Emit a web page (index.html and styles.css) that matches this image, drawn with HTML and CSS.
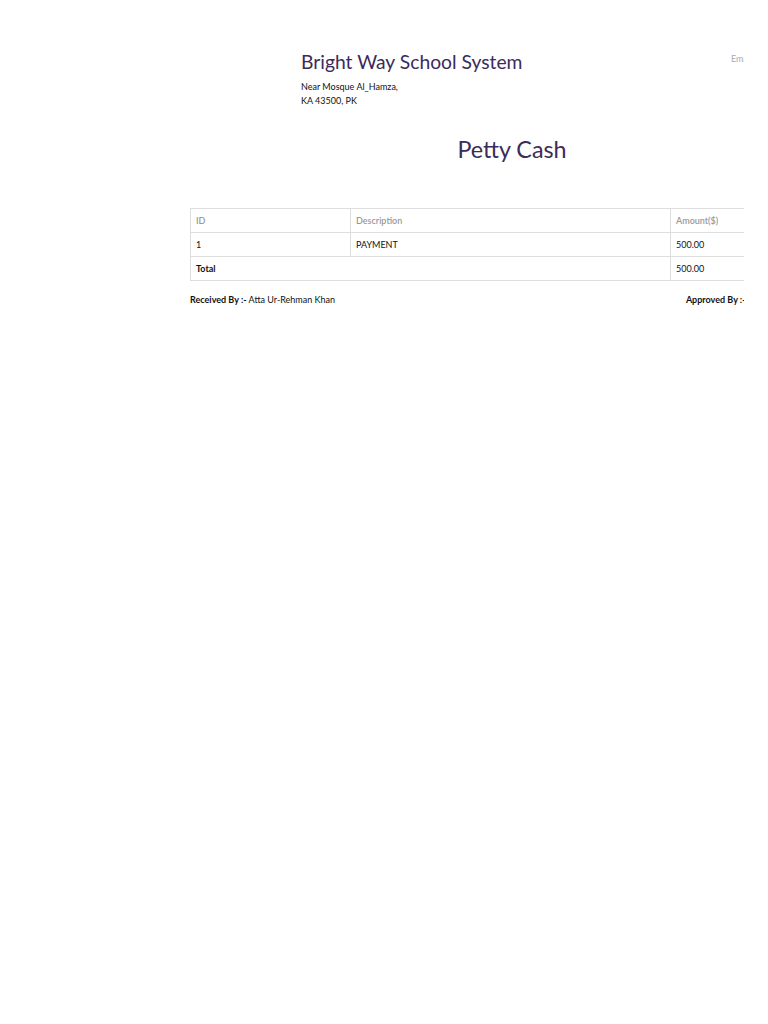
FILE: index.html
```html
<!DOCTYPE html>
<html lang="en">
<head>
  <meta charset="UTF-8">
  <title>Petty Cash – Bright Way School System</title>
  <link rel="stylesheet" href="styles.css">
</head>
<body>
  <div class="sheet">
    <div class="page">

      <div class="head">
        <div class="logo"></div>
        <div class="school">
          <h1>Bright Way School System</h1>
          <p>Near Mosque Al_Hamza,<br>KA 43500, PK</p>
        </div>
        <div class="contact">
          <p>Email: info@brightway.pk</p>
        </div>
      </div>

      <h2 class="doc-title">Petty Cash</h2>

      <table class="items">
        <thead>
          <tr>
            <th class="col-id">ID</th>
            <th class="col-desc">Description</th>
            <th class="col-amt">Amount($)</th>
          </tr>
        </thead>
        <tbody>
          <tr>
            <td>1</td>
            <td>PAYMENT</td>
            <td>500.00</td>
          </tr>
          <tr>
            <td colspan="2" class="total">Total</td>
            <td>500.00</td>
          </tr>
        </tbody>
      </table>

      <div class="signs">
        <div><b>Received By :-</b> Atta Ur-Rehman Khan</div>
        <div><b>Approved By :-</b> Atta Ur-Rehman Khan</div>
      </div>

    </div>
  </div>
</body>
</html>
```

FILE: styles.css
```css
body {
  margin: 0;
  background: #fff;
  font-family: "Source Sans Pro", Lato, "Liberation Sans", sans-serif;
  color: #111;
}
.sheet { width: 744px; overflow: hidden; }
.page { margin-left: 190px; width: 644px; padding-top: 48px; }

.head { display: flex; }
.logo { width: 111px; flex: none; }
.school { flex: 1; }
.school h1 { margin: 0; font-size: 19.3px; font-weight: normal; color: #3b2b5b; line-height: 28px; }
.school p { margin: 4px 0 0; font-size: 9px; line-height: 13.5px; }
.contact { width: 103px; flex: none; padding-top: 4px; }
.contact p { margin: 0; font-size: 9px; line-height: 13.5px; color: #aaa; white-space: nowrap; }

.doc-title {
  margin: 26px 0 0;
  text-align: center;
  font-size: 23.3px;
  font-weight: normal;
  color: #3b2b5b;
  line-height: 32px;
}

.items { width: 644px; margin-top: 43px; border-collapse: collapse; table-layout: fixed; font-size: 9px; }
.items th, .items td { box-sizing: border-box; border: 1px solid #ddd; padding: 0 5px; height: 24px; text-align: left; }
.items th { color: #999; font-weight: 600; }
.col-id { width: 160px; }
.col-desc { width: 320px; }
.total { font-weight: bold; }

.signs { display: flex; justify-content: space-between; margin-top: 13px; font-size: 9px; }
.signs b { font-weight: bold; }
```
